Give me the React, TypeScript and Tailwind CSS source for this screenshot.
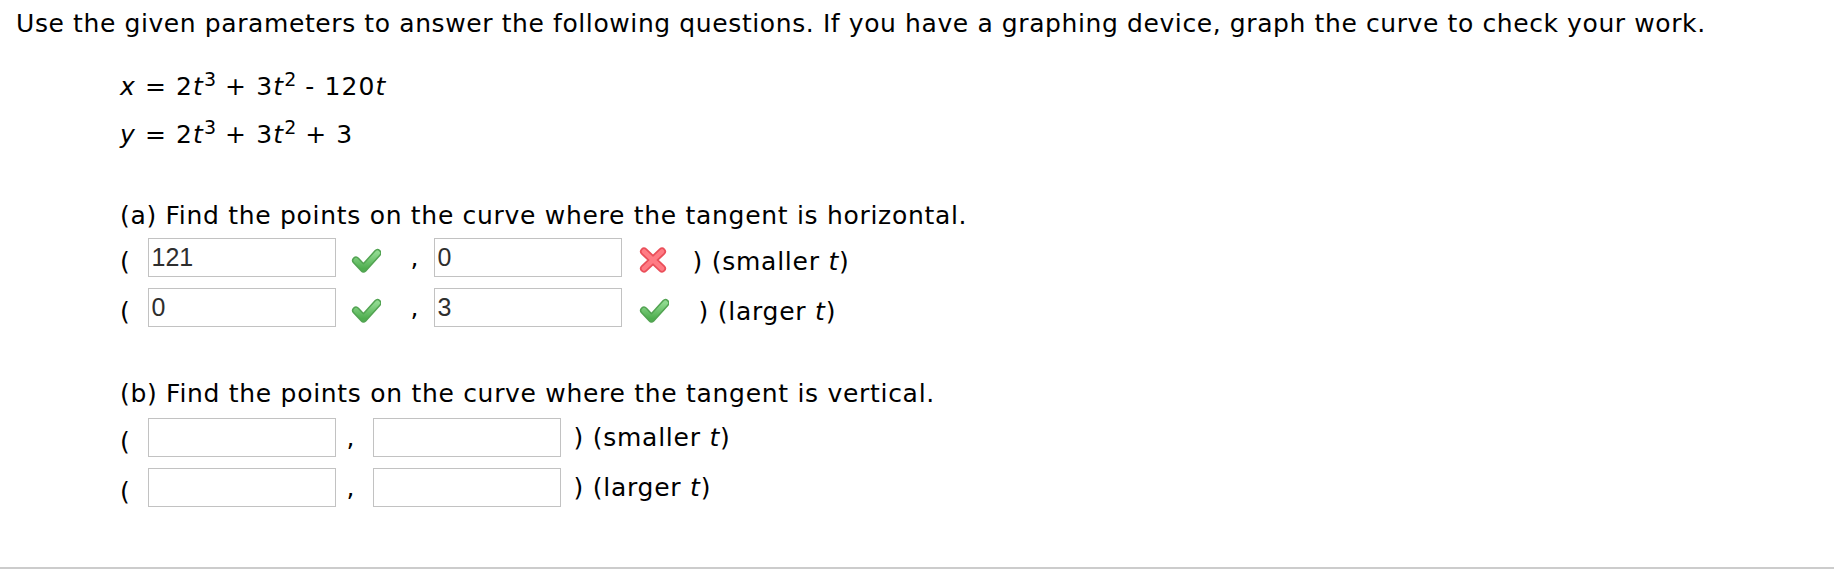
import React from "react";

const Check = () => (
  <svg width="30" height="25" viewBox="0 0 30 25" className="block">
    <defs>
      <linearGradient id="chkg" x1="0" y1="0" x2="0" y2="1">
        <stop offset="0" stopColor="#8fd98f" />
        <stop offset="1" stopColor="#4fae4f" />
      </linearGradient>
    </defs>
    <path d="M5 12.5 L12.5 20.5 L26.5 5" fill="none" stroke="#52a352" strokeWidth="8" strokeLinecap="round" strokeLinejoin="round" />
    <path d="M5 12.5 L12.5 20.5 L26.5 5" fill="none" stroke="url(#chkg)" strokeWidth="5" strokeLinecap="round" strokeLinejoin="round" />
  </svg>
);

const Cross = () => (
  <svg width="28" height="26" viewBox="0 0 28 26" className="block">
    <path d="M5 4.5 L23 21.5 M23 4.5 L5 21.5" fill="none" stroke="#ea4f5a" strokeWidth="8" strokeLinecap="round" />
    <path d="M5 4.5 L23 21.5 M23 4.5 L5 21.5" fill="none" stroke="#ff7b84" strokeWidth="4.5" strokeLinecap="round" />
  </svg>
);

const Box = ({ value = "" }: { value?: string }) => (
  <input
    readOnly
    value={value}
    className="w-[188px] h-[39px] shrink-0 border border-[#c2c2c2] bg-white px-[3px] text-[25px] tracking-normal text-[#2e2e2e] outline-none font-['Liberation_Sans',Arial,sans-serif]"
  />
);

const Label = ({ children }: { children: React.ReactNode }) => (
  <span className="mt-[8px] whitespace-pre leading-[30px] tracking-[0.75px]">{children}</span>
);

const Sup = ({ children }: { children: React.ReactNode }) => (
  <span className="text-[19px] align-[9px] leading-none tracking-normal">{children}</span>
);

export default function App() {
  return (
    <div className="w-[1834px] h-[572px] bg-white text-black text-[25px] tracking-[0.6px] font-['DejaVu_Sans',Verdana,sans-serif] flex flex-col overflow-hidden">
      <div className="pl-[16px] pt-[9px] h-[39px] leading-[30px] whitespace-nowrap">
        Use the given parameters to answer the following questions. If you have a graphing device, graph the curve to check your work.
      </div>

      <div className="pl-[120px] flex flex-col">
        <div className="mt-[24px] h-[48px] leading-[48px] whitespace-pre tracking-[1.1px]">
          <i>x</i> = 2<i>t</i>
          <Sup>3</Sup> + 3<i>t</i>
          <Sup>2</Sup> - 120<i>t</i>
        </div>
        <div className="h-[48px] leading-[48px] whitespace-pre tracking-[1.1px]">
          <i>y</i> = 2<i>t</i>
          <Sup>3</Sup> + 3<i>t</i>
          <Sup>2</Sup> + 3
        </div>

        <div className="mt-[42px] h-[30px] leading-[30px] whitespace-nowrap tracking-[0.7px]">
          (a) Find the points on the curve where the tangent is horizontal.
        </div>

        <div className="mt-[7px] h-[39px] flex items-center">
          <Label>(</Label>
          <span className="w-[17px]" />
          <Box value="121" />
          <div className="w-[70px] pl-[15px] mt-[6px]">
            <Check />
          </div>
          <div className="w-[28px] pl-[5px]">
            <Label>,</Label>
          </div>
          <Box value="0" />
          <div className="w-[71px] pl-[17px] mt-[5px]">
            <Cross />
          </div>
          <Label>
            ) (smaller <i>t</i>)
          </Label>
        </div>

        <div className="mt-[11px] h-[39px] flex items-center">
          <Label>(</Label>
          <span className="w-[17px]" />
          <Box value="0" />
          <div className="w-[70px] pl-[15px] mt-[6px]">
            <Check />
          </div>
          <div className="w-[28px] pl-[5px]">
            <Label>,</Label>
          </div>
          <Box value="3" />
          <div className="w-[77px] pl-[17px] mt-[6px]">
            <Check />
          </div>
          <Label>
            ) (larger <i>t</i>)
          </Label>
        </div>

        <div className="mt-[52px] h-[30px] leading-[30px] whitespace-nowrap tracking-[0.7px]">
          (b) Find the points on the curve where the tangent is vertical.
        </div>

        <div className="mt-[9px] h-[39px] flex items-center">
          <Label>(</Label>
          <span className="w-[17px]" />
          <Box />
          <div className="w-[37px] pl-[11px]">
            <Label>,</Label>
          </div>
          <Box />
          <div className="pl-[13px]">
            <Label>
              ) (smaller <i>t</i>)
            </Label>
          </div>
        </div>

        <div className="mt-[11px] h-[39px] flex items-center">
          <Label>(</Label>
          <span className="w-[17px]" />
          <Box />
          <div className="w-[37px] pl-[11px]">
            <Label>,</Label>
          </div>
          <Box />
          <div className="pl-[13px]">
            <Label>
              ) (larger <i>t</i>)
            </Label>
          </div>
        </div>
      </div>

      <div className="mt-[60px] h-[2px] bg-[#cccccc] shrink-0" />
    </div>
  );
}
